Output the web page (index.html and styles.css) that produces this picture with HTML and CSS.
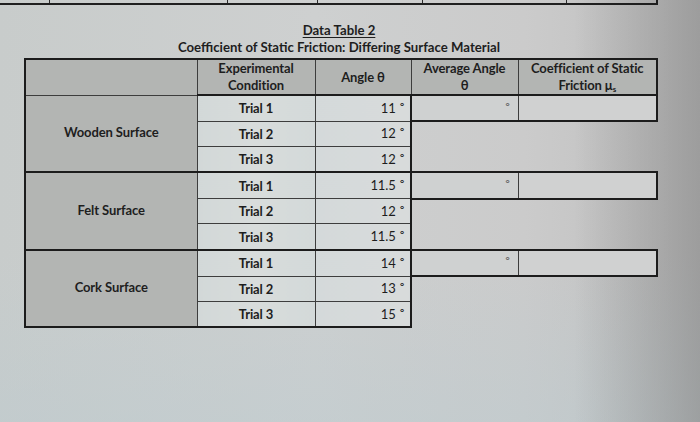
FILE: index.html
```html
<!DOCTYPE html>
<html>
<head>
<meta charset="utf-8">
<link rel="stylesheet" href="styles.css">
</head>
<body>
<div class="page">
  <div class="prev">
    <div class="pc"></div><div class="pc"></div><div class="pc"></div><div class="pc"></div><div class="pc"></div><div class="pc last"></div>
  </div>
  <div class="sheet">
    <div class="titles">
      <div class="title">Data Table 2</div>
      <div class="subtitle">Coefficient of Static Friction: Differing Surface Material</div>
    </div>
    <table class="data">
      <colgroup>
        <col class="c1"><col class="c2"><col class="c3"><col class="c4"><col class="c5">
      </colgroup>
      <thead>
        <tr class="head">
          <th class="gray"></th>
          <th class="gray">Experimental<br>Condition</th>
          <th class="gray">Angle θ</th>
          <th class="gray">Average Angle<br>θ</th>
          <th class="gray">Coefficient of Static<br>Friction μ<sub>s</sub></th>
        </tr>
      </thead>
      <tbody>
        <tr class="first">
          <td class="gray label" rowspan="3">Wooden Surface</td>
          <td class="cond">Trial 1</td>
          <td class="ang">11 <span class="deg">°</span></td>
          <td class="avg"><span class="deg">°</span></td>
          <td class="coef"></td>
        </tr>
        <tr>
          <td class="cond">Trial 2</td>
          <td class="ang">12 <span class="deg">°</span></td>
          <td class="blank" colspan="2" rowspan="2"></td>
        </tr>
        <tr>
          <td class="cond">Trial 3</td>
          <td class="ang">12 <span class="deg">°</span></td>
        </tr>
        <tr class="first">
          <td class="gray label" rowspan="3">Felt Surface</td>
          <td class="cond">Trial 1</td>
          <td class="ang">11.5 <span class="deg">°</span></td>
          <td class="avg"><span class="deg">°</span></td>
          <td class="coef"></td>
        </tr>
        <tr>
          <td class="cond">Trial 2</td>
          <td class="ang">12 <span class="deg">°</span></td>
          <td class="blank" colspan="2" rowspan="2"></td>
        </tr>
        <tr>
          <td class="cond">Trial 3</td>
          <td class="ang">11.5 <span class="deg">°</span></td>
        </tr>
        <tr class="first">
          <td class="gray label" rowspan="3">Cork Surface</td>
          <td class="cond">Trial 1</td>
          <td class="ang">14 <span class="deg">°</span></td>
          <td class="avg"><span class="deg">°</span></td>
          <td class="coef"></td>
        </tr>
        <tr>
          <td class="cond">Trial 2</td>
          <td class="ang">13 <span class="deg">°</span></td>
          <td class="blank" colspan="2" rowspan="2"></td>
        </tr>
        <tr class="lastrow">
          <td class="cond">Trial 3</td>
          <td class="ang">15 <span class="deg">°</span></td>
        </tr>
      </tbody>
    </table>
  </div>
</div>
</body>
</html>
```
FILE: styles.css
```css
html, body {
  margin: 0;
  padding: 0;
}
body {
  width: 700px;
  height: 422px;
  overflow: hidden;
  font-family: Lato, "Open Sans", sans-serif;
  color: #1e1e1e;
  background:
    linear-gradient(90deg, rgba(150,150,150,0) 0%, rgba(150,150,150,0) 82%, rgba(135,135,135,0.6) 100%),
    linear-gradient(180deg, rgba(200,205,205,0) 60%, rgba(190,203,207,0.55) 100%),
    linear-gradient(90deg, #c8cccb 0%, #ced0d0 45%, #cbcbcb 75%, #bdbdbd 100%);
}
.page {
  width: 700px;
  height: 422px;
}
.prev {
  display: grid;
  grid-template-columns: 50px 178px 90px 105px 144px 91px;
  width: 658px;
  height: 3px;
  border-bottom: 2px solid #1f1f1f;
}
.pc {
  border-right: 1px solid #2a2a2a;
}
.pc.last {
  border-right: 2px solid #1f1f1f;
}
.sheet {
  margin-left: 24px;
  width: 632px;
}
.titles {
  margin-top: 17px;
  margin-bottom: 2px;
  text-align: center;
  font-weight: 700;
  font-size: 13.2px;
  line-height: 17px;
  letter-spacing: 0;
  padding-right: 2px;
}
.title {
  text-decoration: underline;
  text-underline-offset: 2px;
  text-decoration-thickness: 1px;
}
.data {
  border-collapse: collapse;
  table-layout: fixed;
  width: 632px;
  font-size: 13px;
  letter-spacing: -0.1px;
  font-weight: 700;
}
.c1 { width: 172px; }
.c2 { width: 118px; }
.c3 { width: 96px; }
.c4 { width: 107px; }
.c5 { width: 139px; }
.data th, .data td {
  padding: 0;
  border: 1px solid #3d3d3d;
  line-height: 16px;
}
.head th {
  height: 33px;
  text-align: center;
  vertical-align: middle;
  border-top: 2px solid #1c1c1c;
  border-bottom: 1px solid #3d3d3d;
  font-weight: 700;
  line-height: 17px;
}
.head th:first-child {
  border-left: 2px solid #1c1c1c;
}
.head th:last-child {
  border-right: 2px solid #1c1c1c;
}
.gray {
  background: #b3b5b3;
}
sub {
  font-size: 8px;
  vertical-align: -2px;
  line-height: 0;
}
.label {
  border-left: 2px solid #1c1c1c !important;
  border-bottom: 2px solid #1c1c1c !important;
  text-align: center;
  vertical-align: middle;
  padding-bottom: 2px !important;
}
tbody td {
  height: 24.3px;
}
.cond {
  text-align: center;
  background: linear-gradient(90deg, #d2d8d8, #d8dcdb 50%, #d3d9d9);
}
.ang {
  text-align: right;
  padding-right: 6px !important;
  font-weight: 400;
  background: linear-gradient(90deg, #d4d9da, #d8dbdb);
  border-right: 2px solid #1c1c1c !important;
}
.deg {
  font-size: 10px;
  font-weight: 700;
  position: relative;
  top: -3px;
  margin-left: 1px;
}
.avg {
  text-align: right;
  padding-right: 8px !important;
  font-weight: 400;
  color: #666;
  background: #cfd1d1;
  border-top: 2px solid #1c1c1c !important;
  border-bottom: 2px solid #1c1c1c !important;
}
.coef {
  background: #d0d1d1;
  border-top: 2px solid #1c1c1c !important;
  border-bottom: 2px solid #1c1c1c !important;
  border-right: 2px solid #1c1c1c !important;
}
tr.first td.cond, tr.first td.ang {
  border-top: 2px solid #1c1c1c;
}
.blank {
  border: none !important;
  background: transparent;
}
tr.lastrow td {
  border-bottom: 2px solid #1c1c1c;
}
```
